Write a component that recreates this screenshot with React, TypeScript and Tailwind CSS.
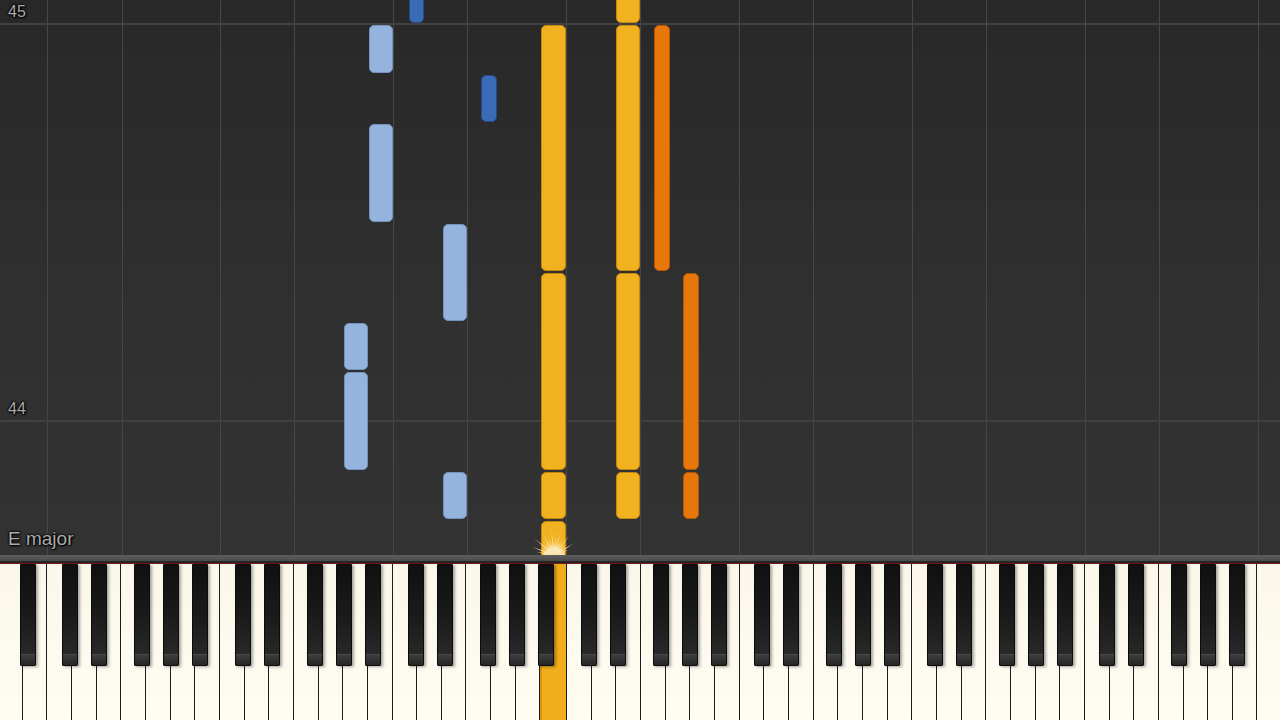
import React from 'react';

const W = 24.7; // white key width
const E = 49.625; // one eighth note in px
const LINE44 = 421; // y of measure 44 line

type Kind = 'lb' | 'db' | 'y' | 'o';

interface Note {
  x: number;
  w: number;
  start: number;
  len: number;
  kind: Kind;
}

const white = (k: number) => k * W - 2;

const noteStyles: Record<Kind, string> = {
  lb: 'bg-[#94b4dd] border-[#7492bd]',
  db: 'bg-[#3a6bb6] border-[#28498a]',
  y: 'bg-[#f2b11f] border-[#c4860c]',
  o: 'bg-[#e8770b] border-[#b25703]',
};

const notes: Note[] = [
  // right hand
  { x: white(22), w: W, start: -3, len: 1, kind: 'y' },
  { x: white(22), w: W, start: -2, len: 1, kind: 'y' },
  { x: white(22), w: W, start: -1, len: 4, kind: 'y' },
  { x: white(22), w: W, start: 3, len: 5, kind: 'y' },
  { x: white(25), w: W, start: -2, len: 1, kind: 'y' },
  { x: white(25), w: W, start: -1, len: 4, kind: 'y' },
  { x: white(25), w: W, start: 3, len: 5, kind: 'y' },
  { x: white(25), w: W, start: 8, len: 1, kind: 'y' },
  { x: 654, w: 16, start: 3, len: 5, kind: 'o' },
  { x: 683, w: 16, start: -2, len: 1, kind: 'o' },
  { x: 683, w: 16, start: -1, len: 4, kind: 'o' },
  // left hand
  { x: white(14), w: W, start: -1, len: 2, kind: 'lb' },
  { x: white(14), w: W, start: 1, len: 1, kind: 'lb' },
  { x: white(18), w: W, start: -2, len: 1, kind: 'lb' },
  { x: white(18), w: W, start: 2, len: 2, kind: 'lb' },
  { x: white(15), w: W, start: 4, len: 2, kind: 'lb' },
  { x: white(15), w: W, start: 7, len: 1, kind: 'lb' },
  { x: 481, w: 16, start: 6, len: 1, kind: 'db' },
  { x: 409, w: 15, start: 8, len: 1, kind: 'db' },
];

// C and F boundaries
const gridX: number[] = [];
for (let n = 0; n < 8; n++) {
  gridX.push(white(2 + 7 * n));
  gridX.push(white(5 + 7 * n));
}

// black keys, x within keyboard container
const blackOffsets = [14.6, 43.6, 86.6, 115.6, 144.6];
const blackKeys: number[] = [-5 * W + 145.5];
for (let n = 1; n <= 7; n++) {
  const c = (2 + 7 * (n - 1)) * W;
  blackOffsets.forEach((o) => blackKeys.push(c + o));
}

const labelCls =
  'absolute left-[8px] text-[#ababab] [text-shadow:0_0_1px_#000,0_0_2px_#000,0_0_3px_#000,1px_1px_2px_#000]';

function Sparkle() {
  const spikes = [
    [190, 18], [200, 24], [210, 15], [220, 26], [231, 18], [242, 28], [253, 20],
    [264, 27], [275, 21], [286, 28], [297, 19], [308, 25], [319, 16], [330, 23], [341, 15], [351, 19],
  ];
  const cx = 30;
  const cy = 32;
  const pts: string[] = [];
  spikes.forEach(([deg, r]) => {
    const a1 = ((deg - 5) * Math.PI) / 180;
    const a2 = (deg * Math.PI) / 180;
    pts.push(`${cx + Math.cos(a1) * 8},${cy + Math.sin(a1) * 8}`);
    pts.push(`${cx + Math.cos(a2) * r},${cy + Math.sin(a2) * r}`);
  });
  return (
    <svg width="60" height="32" viewBox="0 0 60 32" className="absolute left-[524px] top-[523px]">
      <defs>
        <radialGradient id="spark" cx={cx} cy={cy} r="28" gradientUnits="userSpaceOnUse">
          <stop offset="0" stopColor="#fff4d6" />
          <stop offset="0.5" stopColor="#f8dc98" stopOpacity="0.95" />
          <stop offset="1" stopColor="#f0c060" stopOpacity="0.55" />
        </radialGradient>
      </defs>
      <polygon points={pts.join(' ')} fill="url(#spark)" />
      <ellipse cx={cx} cy={cy} rx="11" ry="6" fill="#fbe7b4" opacity="0.9" />
    </svg>
  );
}

export default function App() {
  return (
    <div className="w-[1280px] h-[720px] overflow-hidden flex flex-col bg-[#2e2e2e] font-['Liberation_Sans',Arial,sans-serif]">
      {/* Note roll */}
      <div className="relative h-[555px] shrink-0 overflow-hidden bg-gradient-to-b from-[#282828] via-[#2f2f2f] to-[#333333]">
        {gridX.map((x) => (
          <div key={x} className="absolute top-0 bottom-0 w-px bg-[#474747]" style={{ left: Math.round(x) }} />
        ))}
        <div className="absolute left-0 right-0 top-[23px] h-[2px] bg-[#414141]" />
        <div className="absolute left-0 right-0 top-[420px] h-[2px] bg-[#414141]" />

        {notes.map((n, i) => {
          const top = LINE44 - (n.start + n.len) * E + 1;
          return (
            <div
              key={i}
              className={`absolute rounded-[5px] border ${noteStyles[n.kind]}`}
              style={{ left: n.x, width: n.w, top, height: n.len * E - 2 }}
            />
          );
        })}

        <Sparkle />

        <span className={`${labelCls} top-[0px] text-[16px]`}>45</span>
        <span className={`${labelCls} top-[397px] text-[16px]`}>44</span>
        <span className={`${labelCls} top-[525px] text-[19px]`}>E major</span>
      </div>

      {/* Keyboard rail */}
      <div className="h-[6px] shrink-0 bg-gradient-to-b from-[#5e5e5e] to-[#4a4a4a]" />
      <div className="h-[2px] shrink-0 bg-[#262626]" />
      <div className="h-[1px] shrink-0 bg-[#6e1a1a]" />

      {/* Keyboard */}
      <div className="relative flex h-[156px] w-[1284px] -ml-[2px] shrink-0">
        {Array.from({ length: 52 }).map((_, k) => (
          <div
            key={k}
            className={`flex-1 border-r border-[#1c1c1c] ${
              k === 22 ? 'bg-[#f1ae1c] border-l-2 border-l-[#d8920e]' : 'bg-gradient-to-b from-[#fbf7ea] to-[#fffcf2]'
            }`}
          />
        ))}
        {blackKeys.map((x) => (
          <div
            key={x}
            className="absolute top-0 w-[16px] h-[102px] flex flex-col rounded-b-[1px] border border-[#0c0c0c] bg-gradient-to-b from-[#101010] via-[#1a1a1a] to-[#2c2c2c] shadow-[2px_1px_3px_rgba(0,0,0,0.35)]"
            style={{ left: x }}
          >
            <div className="mt-auto h-[11px] bg-gradient-to-b from-[#3c3c3c] to-[#262626] border-t border-[#484848]" />
          </div>
        ))}
      </div>
    </div>
  );
}
